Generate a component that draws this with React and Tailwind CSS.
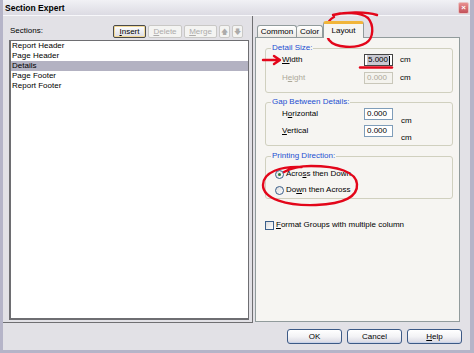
import { useState } from "react";

const sections = ["Report Header", "Page Header", "Details", "Page Footer", "Report Footer"];

function Key({ children }) {
  return <span className="underline underline-offset-[1px]">{children}</span>;
}

function SmallButton({ children, disabled, def, className = "" }) {
  return (
    <div
      className={`flex h-[13px] items-center justify-center rounded-[2px] border ${
        disabled ? "border-[#c9c8c6] text-[#acabaa] bg-[#f4f4f2]" : "border-[#1f3a64] bg-gradient-to-b from-white to-[#dcdce2]"
      } ${def ? "shadow-[inset_0_0_0_1px_#f3d997]" : ""} ${className}`}
    >
      {children}
    </div>
  );
}

function DialogButton({ children }) {
  return (
    <div className="flex h-[15px] w-[55px] items-center justify-center rounded-[3px] border border-[#3d5a86] bg-gradient-to-b from-white via-[#f3f3f6] to-[#d8d8e2] shadow-[inset_0_-1px_0_#c9d3e8]">
      {children}
    </div>
  );
}

function NumBox({ value, disabled, selected }) {
  return (
    <div
      className={`flex h-[12px] w-[29px] items-center border pl-[2px] ${
        disabled ? "border-[#c9c7ba] bg-[#f4f3ee] text-[#aca899]" : "border-[#7f9db9] bg-white"
      } ${selected ? "border-[#444]" : ""}`}
    >
      {selected ? (
        <span className="flex items-center">
          <span className="bg-[#c9c9d2] px-[1px]">{value}</span>
          <span className="h-[9px] w-px bg-black" />
        </span>
      ) : (
        value
      )}
    </div>
  );
}

function Group({ title, className = "", children }) {
  return (
    <fieldset className={`rounded-[3px] border border-[#d0d0bf] ${className}`}>
      <legend className="ml-[5px] px-[1px] text-[#1c4fd1]">{title}</legend>
      {children}
    </fieldset>
  );
}

function Radio({ checked, children }) {
  return (
    <div className="flex h-[10px] items-center gap-[2px]">
      <span className="flex h-[9px] w-[9px] items-center justify-center rounded-full border border-[#3a5f8a] bg-gradient-to-br from-[#dcdcdc] to-white">
        {checked && <span className="h-[3px] w-[3px] rounded-full bg-[#2f7a2f]" />}
      </span>
      <span>{children}</span>
    </div>
  );
}

export default function App() {
  const [selected, setSelected] = useState(2);

  return (
    <div className="relative h-[353px] w-[474px] overflow-hidden font-['Liberation_Sans',Arial,sans-serif] text-[8px] leading-[10px] text-black">
      <div className="flex h-full w-full flex-col border-b-[3px] border-l-[3px] border-r-[4px] border-[#b5b4c8] bg-[#e2e1e6]">
        {/* title bar */}
        <div className="flex h-[16px] shrink-0 items-center justify-between border-b border-[#f7f7fa] bg-gradient-to-b from-[#f1f1f5] to-[#dcdbe3] pl-[2px]">
          <span className="text-[8.5px] font-bold">Section Expert</span>
          <div className="mr-px flex h-[12px] w-[11px] items-center justify-center rounded-[2px] border border-[#e9c3c3] bg-gradient-to-b from-[#e99090] to-[#c2505a] text-[8px] font-bold leading-none text-white">
            ×
          </div>
        </div>

        <div className="flex h-[307px] shrink-0">
          {/* left pane */}
          <div className="flex w-[250px] shrink-0 flex-col border-b border-r border-[#6f6f72] pb-[2px] pl-[6px] pr-[3px] pt-[9px]">
            <div className="flex items-start">
              <span className="flex-1 pl-px pt-px">Sections:</span>
              <div className="mr-[6px] flex gap-[2px]">
                <SmallButton def className="w-[33px] border-[#4a4a4a]">
                  <Key>I</Key>nsert
                </SmallButton>
                <SmallButton disabled className="w-[34px]">
                  <Key>D</Key>elete
                </SmallButton>
                <SmallButton disabled className="w-[33px]">
                  <Key>M</Key>erge
                </SmallButton>
                <SmallButton disabled className="w-[11px] text-[7px]">
                  🡅
                </SmallButton>
                <SmallButton disabled className="w-[11px] text-[7px]">
                  🡇
                </SmallButton>
              </div>
            </div>
            <div className="mt-[2px] flex-1 border-b-2 border-l-2 border-r border-t border-[#6e6e72] bg-white">
              {sections.map((name, i) => (
                <div
                  key={name}
                  onClick={() => setSelected(i)}
                  className={`h-[10px] pl-px ${i === selected ? "bg-[#b3b2c2]" : ""}`}
                >
                  {name}
                </div>
              ))}
            </div>
          </div>

          {/* right pane */}
          <div className="flex flex-1 flex-col pb-px pl-[2px] pr-[10px] pt-[5px]">
            <div className="ml-[2px] flex items-end">
              <div className="flex h-[12px] w-[40px] items-center justify-center rounded-t-[3px] border border-b-0 border-[#919b9c] bg-gradient-to-b from-white to-[#eceae4]">
                Common
              </div>
              <div className="flex h-[12px] w-[26px] items-center justify-center rounded-t-[3px] border border-b-0 border-l-0 border-[#919b9c] bg-gradient-to-b from-white to-[#eceae4]">
                Color
              </div>
              <div className="relative z-10 -mb-px flex h-[17px] w-[41px] items-center justify-center rounded-t-[3px] border border-b-0 border-t-[3px] border-[#919b9c] border-t-[#f1b53a] bg-[#f6f5f2] pb-px">
                Layout
              </div>
            </div>
            <div className="flex-1 border border-[#919b9c] bg-[#f6f5f2] pl-[9px] pr-[6px] pt-[5px]">
              <Group title="Detail Size:" className="pb-[8px]">
                <div className="mt-px grid grid-cols-[82px_29px_auto] items-center gap-y-[6px] pl-[16px]">
                  <span>
                    <Key>W</Key>idth
                  </span>
                  <NumBox value="5.000" selected />
                  <span className="pl-[7px]">cm</span>
                  <span className="text-[#aca899]">
                    H<Key>e</Key>ight
                  </span>
                  <NumBox value="0.000" disabled />
                  <span className="pl-[7px]">cm</span>
                </div>
              </Group>

              <Group title="Gap Between Details:" className="mt-[4px] pb-[8px]">
                <div className="mt-px grid grid-cols-[82px_29px_auto] items-center gap-y-[5px] pl-[16px]">
                  <span>
                    H<Key>o</Key>rizontal
                  </span>
                  <NumBox value="0.000" />
                  <span className="translate-y-[7px] pl-[8px]">cm</span>
                  <span>
                    <Key>V</Key>ertical
                  </span>
                  <NumBox value="0.000" />
                  <span className="translate-y-[7px] pl-[8px]">cm</span>
                </div>
              </Group>

              <Group title="Printing Direction:" className="mt-[5px] pb-[3px]">
                <div className="mt-[8px] flex flex-col gap-[6px] pl-[9px]">
                  <Radio checked>
                    Acro<Key>s</Key>s then Down
                  </Radio>
                  <Radio>
                    Do<Key>w</Key>n then Across
                  </Radio>
                </div>
              </Group>

              <div className="mt-[21px] flex items-center gap-[2px]">
                <span className="h-[9px] w-[9px] border border-[#3a5f8a] bg-gradient-to-br from-[#dcdcdc] to-white" />
                <span>
                  <Key>F</Key>ormat Groups with multiple column
                </span>
              </div>
            </div>
          </div>
        </div>

        {/* bottom buttons */}
        <div className="flex flex-1 justify-end gap-[5px] pr-[8px] pt-[6px]">
          <DialogButton>OK</DialogButton>
          <DialogButton>Cancel</DialogButton>
          <DialogButton>
            <Key>H</Key>elp
          </DialogButton>
        </div>
      </div>

      {/* red annotations */}
      <svg className="pointer-events-none absolute inset-0" width="474" height="353" viewBox="0 0 474 353" fill="none">
        <g stroke="#e3061a" strokeWidth="2.4" strokeLinecap="round" strokeLinejoin="round">
          <path d="M334 17 C326 21 324 32 329 40 C335 48 356 49 366 43 C374 38 374 25 368 18 C361 12 343 12 333 15 C345 12 365 11 377 15" />
          <path d="M263 60 H279 M274 56 L280 60 L274 64" />
          <path d="M360 67.5 H392" />
          <path d="M302 167 C281 166 263 172 263 185 C263 199 287 206 316 205 C345 204 358 196 357 184 C356 172 338 166 311 166 C300 166 291 168 284 172" />
        </g>
      </svg>
    </div>
  );
}
